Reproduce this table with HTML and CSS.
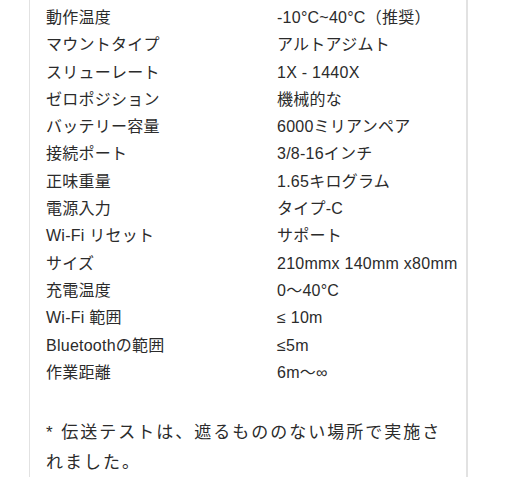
FILE: index.html
```html
<!DOCTYPE html>
<html lang="ja">
<head>
<meta charset="utf-8">
<link rel="stylesheet" href="styles.css">
</head>
<body>
<div class="panel">
  <div class="specs">
    <div class="k">動作温度</div><div class="v">-10°C~40°C（推奨）</div>
    <div class="k">マウントタイプ</div><div class="v">アルトアジムト</div>
    <div class="k">スリューレート</div><div class="v">1X - 1440X</div>
    <div class="k">ゼロポジション</div><div class="v">機械的な</div>
    <div class="k">バッテリー容量</div><div class="v">6000ミリアンペア</div>
    <div class="k">接続ポート</div><div class="v">3/8-16インチ</div>
    <div class="k">正味重量</div><div class="v">1.65キログラム</div>
    <div class="k">電源入力</div><div class="v">タイプ-C</div>
    <div class="k">Wi-Fi リセット</div><div class="v">サポート</div>
    <div class="k">サイズ</div><div class="v">210mmx 140mm x80mm</div>
    <div class="k">充電温度</div><div class="v">0〜40°C</div>
    <div class="k">Wi-Fi 範囲</div><div class="v">≤ 10m</div>
    <div class="k">Bluetoothの範囲</div><div class="v">≤5m</div>
    <div class="k">作業距離</div><div class="v">6m〜∞</div>
  </div>
  <p class="note">* 伝送テストは、遮るもののない場所で実施されました。</p>
</div>
</body>
</html>
```
FILE: styles.css
```css
html, body {
  margin: 0;
  padding: 0;
  background: #fff;
}
body {
  width: 512px;
  height: 477px;
  overflow: hidden;
  font-family: "Liberation Sans", "Noto Sans CJK JP", sans-serif;
  color: #2b2b2b;
}
.panel {
  margin-left: 29px;
  width: 439px;
  height: 477px;
  border-left: 1px solid #e2e2e2;
  border-right: 2px solid #e2e2e2;
  padding: 4px 0 0 16px;
  box-sizing: border-box;
}
.specs {
  display: grid;
  grid-template-columns: 231px 1fr;
  font-size: 16px;
  line-height: 27.3px;
  letter-spacing: 0.25px;
}
.note {
  margin: 32px 0 0;
  font-size: 17px;
  line-height: 30px;
  letter-spacing: 2px;
  padding-right: 8px;
}
```
